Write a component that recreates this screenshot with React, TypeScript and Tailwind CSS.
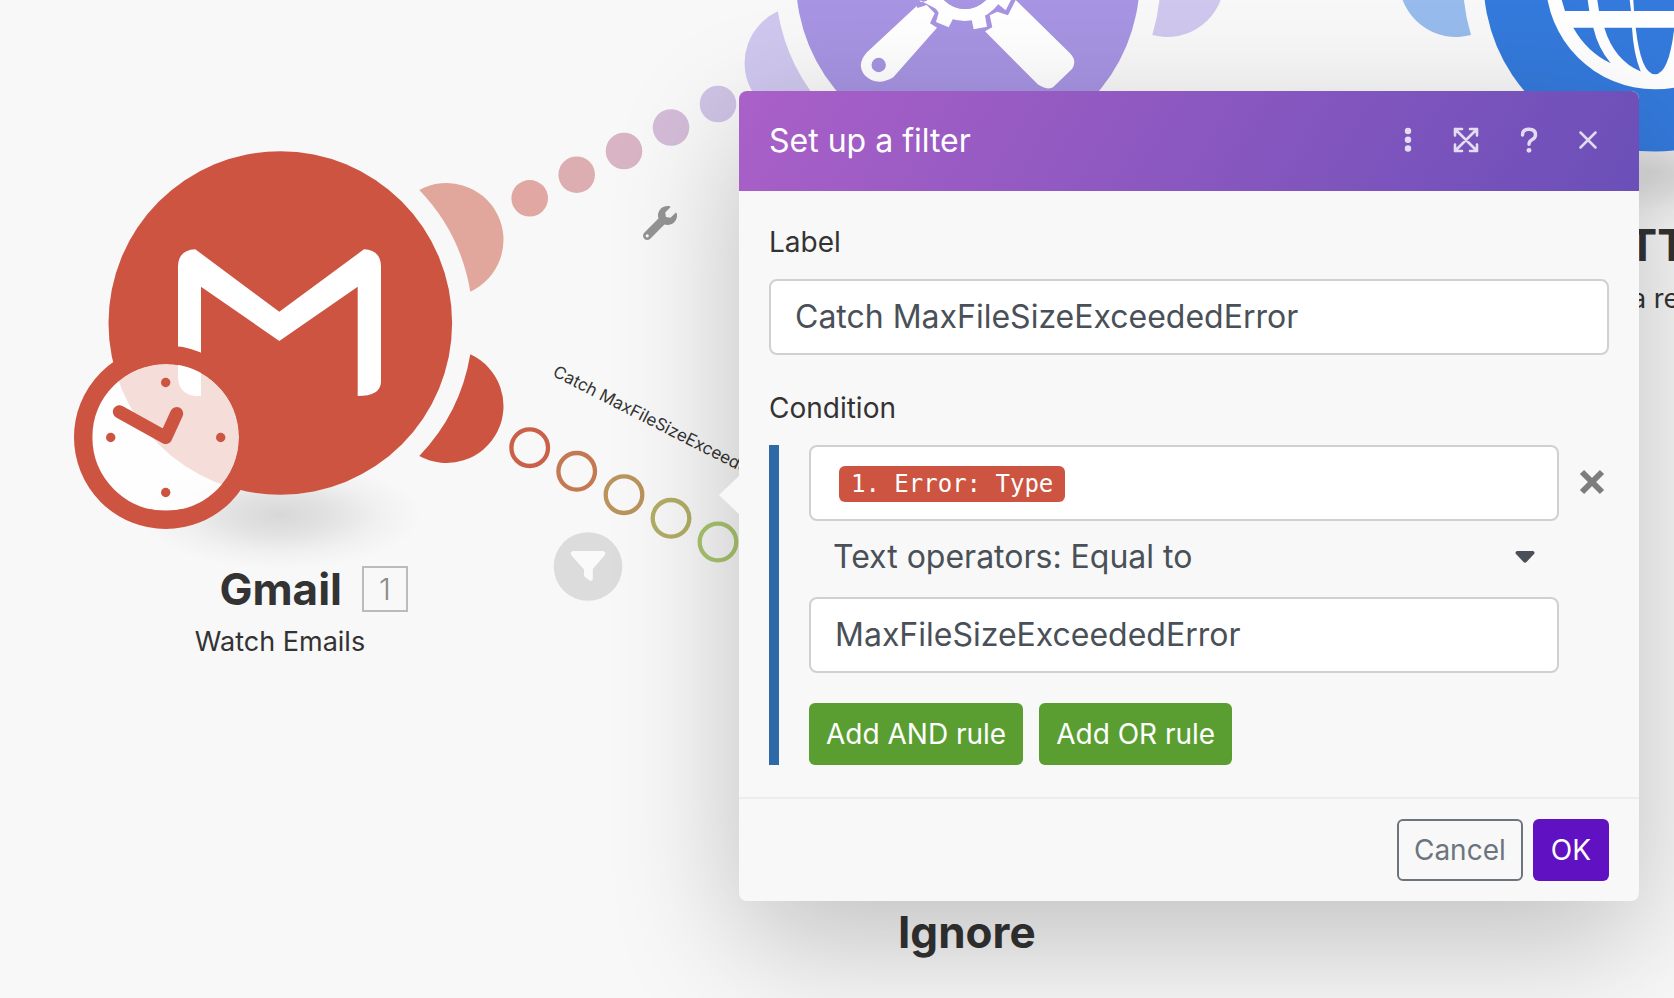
import { useState } from "react";
import type { ReactNode } from "react";

type Dot = { x: number; y: number; color: string };

const solidDots: Dot[] = [
  { x: 529.7, y: 198.3, color: "#e1a8a3" },
  { x: 576.7, y: 174.7, color: "#dcaeb1" },
  { x: 624, y: 151, color: "#d8b4c4" },
  { x: 671, y: 127.5, color: "#d4bcd8" },
  { x: 718, y: 104, color: "#d0c4e6" },
];

const ringDots: Dot[] = [
  { x: 529.7, y: 447.7, color: "#cb6048" },
  { x: 576.7, y: 471.3, color: "#c47952" },
  { x: 624, y: 494.7, color: "#bb935c" },
  { x: 671, y: 518.3, color: "#b3ad65" },
  { x: 718, y: 542, color: "#abc570" },
];

function Scene() {
  return (
    <svg
      className="pointer-events-none absolute left-0 top-0"
      width="1674"
      height="998"
      viewBox="0 0 1674 998"
      aria-hidden="true"
    >
      <defs>
        <radialGradient id="ground">
          <stop offset="0" stopColor="#000" stopOpacity="0.13" />
          <stop offset="0.35" stopColor="#000" stopOpacity="0.09" />
          <stop offset="0.7" stopColor="#000" stopOpacity="0.03" />
          <stop offset="1" stopColor="#000" stopOpacity="0" />
        </radialGradient>
      </defs>

      {/* Gmail module */}
      <ellipse cx="280" cy="515" rx="142" ry="54" fill="url(#ground)" />
      <circle cx="280.3" cy="323" r="171.8" fill="#cc5441" />
      <path d="M419.3 190A56.92 56.92 0 1 1 470.3 291.7A192.4 192.4 0 0 0 419.3 190Z" fill="#e2a79c" />
      <path d="M419.3 456A56.92 56.92 0 1 0 470.3 354.3A192.4 192.4 0 0 1 419.3 456Z" fill="#cc5441" />
      <path
        d="M178 266Q178.500 250 195.300 249.300L279.300 311.700L364 249.300Q380.500 250 381 266V382Q380.500 396 357.700 396V286.700L279.300 341L201 286.700V396H195Q178.500 394 178 377Z"
        fill="#fff"
      />
      <circle cx="165.700" cy="437.300" r="73.300" fill="#fff" fillOpacity="0.8" />
      <circle cx="165.700" cy="437.300" r="82.500" fill="none" stroke="#cc5441" strokeWidth="18.400" />
      <g fill="#cc5441">
        <circle cx="165.700" cy="382.500" r="4.700" />
        <circle cx="165.700" cy="492.500" r="4.700" />
        <circle cx="110.700" cy="437.500" r="4.700" />
        <circle cx="220.700" cy="437.500" r="4.700" />
      </g>
      <path
        d="M119.300 411.700L165.700 437.500L176.700 413.500"
        fill="none"
        stroke="#cc5441"
        strokeWidth="13"
        strokeLinecap="round"
        strokeLinejoin="round"
      />

      {/* Routes */}
      {solidDots.map((d) => (
        <circle key={d.x} cx={d.x} cy={d.y} r="18.300" fill={d.color} />
      ))}
      {ringDots.map((d) => (
        <circle key={d.x} cx={d.x} cy={d.y} r="18.300" fill="none" stroke={d.color} strokeWidth="4.300" />
      ))}

      {/* Tools module */}
      <circle cx="967.800" cy="-20" r="171.800" fill="#a794e2" />
      <path d="M777.800 11.300A56.920 56.920 0 1 0 828.800 113A192.400 192.400 0 0 1 777.800 11.300Z" fill="#cfc7ee" />
      <path d="M1152.300 35A57 57 0 1 0 1152.300 -75A192.400 192.400 0 0 1 1152.300 35Z" fill="#cfc7ee" />
      <path
        fillRule="evenodd"
        d="M916.700 6L866.700 52.500Q856 65 865 75.500Q877 87 893.300 77.300L937 27.700L930 23.300L934.700 13.300L926.700 5L917.500 8ZM878.700 57.800a7.200 7.200 0 1 1 0 14.400a7.200 7.200 0 1 1 0-14.400Z"
        fill="#fff"
      />
      <path
        d="M985 31.300L992.300 27.300L989.700 15.300L997.300 11.700L1008 15.300L1015.700 0L1070 53.300Q1077.500 61 1072 69L1053 87.300Q1048 90.500 1038 84.500Z"
        fill="#fff"
      />
      <circle cx="965" cy="-20" r="35" fill="none" stroke="#fff" strokeWidth="12" />
      <path
        d="M919.300 0L921 2.300L926.500 1L929 -2L938.700 12.700L936 22L948.700 27.300L953.500 18ZM971.500 19L973.700 29.300L987 26.700L984.700 14L998 4L1005.700 10.300L1011 0L1000 -6L984 9Z"
        fill="#fff"
      />
      <circle cx="965" cy="-20" r="29" fill="#a794e2" />

      {/* HTTP module */}
      <ellipse cx="1655" cy="172" rx="142" ry="54" fill="url(#ground)" />
      <circle cx="1655" cy="-20" r="171.500" fill="#347adc" />
      <path d="M1471 35A57 57 0 1 1 1471 -75A192.400 192.400 0 0 0 1471 35Z" fill="#97bbec" />
      <circle cx="1655" cy="-20" r="109.300" fill="#fff" />
      <g fill="#347adc">
        <path d="M1561.700 0L1565 11H1589.300L1587.700 0Z" />
        <path d="M1597.300 0L1599 11H1631L1629.700 0Z" />
        <path d="M1633.300 0L1634 11H1676V0Z" />
        <path d="M1573.300 27.700H1593.300Q1598 48 1610.700 63.300Q1587 52 1573.300 27.700Z" />
        <path d="M1604.300 27.700H1632Q1633.500 54 1640.700 71.500Q1614 60 1604.300 27.700Z" />
        <path d="M1635.700 27.700H1674.300Q1669 74 1655 74.300Q1641 74 1635.700 27.700Z" />
      </g>

      {/* Wrench */}
      <g transform="translate(643 206) scale(0.0665)" fill="#949494">
        <path d="M507.730 109.100c-2.240-9.030-13.540-12.090-20.120-5.510l-74.360 74.360-67.880-11.310-11.310-67.880 74.360-74.360c6.620-6.620 3.430-17.900-5.660-20.160-47.380-11.740-99.550.91-136.580 37.930-39.640 39.640-50.550 97.100-34.050 147.200L18.740 402.760c-24.990 24.990-24.990 65.510 0 90.500 24.990 24.990 65.510 24.990 90.500 0l213.210-213.210c50.120 16.710 107.470 5.680 147.370-34.220 37.070-37.070 49.700-89.320 37.910-136.730zM64 472c-13.250 0-24-10.750-24-24 0-13.260 10.750-24 24-24s24 10.740 24 24c0 13.250-10.750 24-24 24z" />
      </g>

      {/* Filter badge */}
      <circle cx="588" cy="566.500" r="34.300" fill="#dcdcdc" />
      <path
        d="M573 551H603Q607 552 604.500 555.500L592.800 569V579Q592 581.500 589.500 580.500L585 577Q584 576 584 574.500V569.500L571.500 555.500Q569.500 552 573 551Z"
        fill="#fafafa"
      />
    </svg>
  );
}

function HeaderButton({ label, children }: { label: string; children: ReactNode }) {
  return (
    <button type="button" aria-label={label} className="flex h-10 items-center justify-center pb-0.5 text-white/80">
      {children}
    </button>
  );
}

function FilterPanel() {
  const [label, setLabel] = useState("Catch MaxFileSizeExceededError");
  const [value, setValue] = useState("MaxFileSizeExceededError");
  const field =
    "h-[76px] w-full rounded-lg border-2 border-[#d0d0d0] bg-white px-6 pb-0.5 text-[32px] text-[#495057] outline-none";

  return (
    <section
      role="dialog"
      aria-labelledby="panel-title"
      className="relative rounded-lg bg-[#f8f8f8] shadow-[0_40px_128px_rgba(0,0,0,0.23)]"
    >
      <svg className="absolute -left-5 top-[384px]" width="21" height="40" viewBox="0 0 21 40" aria-hidden="true">
        <path d="M21 0L0 20L21 40Z" fill="#f8f8f8" />
      </svg>

      <header className="flex h-[100px] items-center justify-between rounded-t-lg bg-[linear-gradient(120deg,#aa60c8,#6b4fb8)] pl-[30px] pr-[42px] text-white">
        <h2 id="panel-title" className="text-[32px] font-normal">
          Set up a filter
        </h2>
        <div className="flex items-center gap-[41px]">
          <HeaderButton label="More options">
            <svg width="8" height="26" viewBox="0 0 8 26" fill="currentColor">
              <circle cx="4" cy="4" r="3.200" />
              <circle cx="4" cy="12.800" r="3.200" />
              <circle cx="4" cy="21.500" r="3.200" />
            </svg>
          </HeaderButton>
          <HeaderButton label="Expand">
            <svg
              width="26"
              height="26"
              viewBox="0 0 26 26"
              fill="none"
              stroke="currentColor"
              strokeWidth="2.600"
              strokeLinecap="round"
              strokeLinejoin="round"
            >
              <path d="M2 2L24 24M24 2L2 24M2 8.500V2H9M17 2H24V8.500M24 17.500V24H17M9 24H2V17.500" />
            </svg>
          </HeaderButton>
          <HeaderButton label="Help">
            <svg width="18" height="26" viewBox="0 0 18 26" fill="none" stroke="currentColor" strokeLinecap="round">
              <path
                d="M2.500 8Q2.500 2.200 9 2.200Q15.500 2.200 15.500 7.800Q15.500 11 12 12.800Q9 14.500 9 17.300"
                strokeWidth="3.400"
                strokeLinejoin="round"
              />
              <circle cx="9" cy="23.300" r="2.400" fill="currentColor" stroke="none" />
            </svg>
          </HeaderButton>
          <HeaderButton label="Close">
            <svg width="18" height="18" viewBox="0 0 18 18" fill="none" stroke="currentColor" strokeWidth="2.500" strokeLinecap="round">
              <path d="M1.500 1.500L16.500 16.500M16.500 1.500L1.500 16.500" />
            </svg>
          </HeaderButton>
        </div>
      </header>

      <form onSubmit={(e) => e.preventDefault()}>
        <div className="px-[30px] pb-8 pt-[30px]">
          <label htmlFor="filter-label" className="mb-4 block text-[28px] leading-[42px] text-[#333]">
            Label
          </label>
          <input id="filter-label" className={field} value={label} onChange={(e) => setLabel(e.target.value)} />

          <fieldset className="mt-8">
            <legend className="mb-4 block text-[28px] leading-[42px] text-[#333]">Condition</legend>
            <div className="border-l-[10px] border-[#2e6aa7] pl-[30px]">
              <div className="flex">
                <div className="min-w-0 flex-1">
                  <div className="flex h-[76px] items-center rounded-lg border-2 border-[#d0d0d0] bg-white px-7 pt-0.5">
                    <span className="rounded-md bg-[#cc5441] px-3 font-['DejaVu_Sans_Mono',monospace] text-[24px] leading-9 text-white">
                      1. Error: Type
                    </span>
                  </div>
                  <div className="relative h-[76px]">
                    <select
                      aria-label="Operator"
                      className="h-full w-full appearance-none bg-transparent px-6 pb-1 text-[32px] text-[#495057] outline-none"
                    >
                      <option>Text operators: Equal to</option>
                    </select>
                    <svg
                      className="pointer-events-none absolute right-6 top-[29px]"
                      width="20"
                      height="14"
                      viewBox="0 0 20 14"
                      aria-hidden="true"
                    >
                      <path d="M2 1H18Q20.500 2 19 4L11.500 12Q10 13.500 8.500 12L1 4Q-0.500 2 2 1Z" fill="#495057" />
                    </svg>
                  </div>
                  <input
                    aria-label="Value"
                    className={field}
                    value={value}
                    onChange={(e) => setValue(e.target.value)}
                  />
                </div>
                <button
                  type="button"
                  aria-label="Remove condition"
                  className="flex h-[76px] w-[50px] items-center justify-end pb-0.5 pr-1"
                >
                  <svg width="26" height="26" viewBox="0 0 26 26" fill="none" stroke="#7d7d7d" strokeWidth="6">
                    <path d="M3 3L23 23M23 3L3 23" />
                  </svg>
                </button>
              </div>
              <div className="mt-[30px] flex gap-4">
                <button type="button" className="h-[62px] rounded-md bg-[#5a9e32] px-[17px] text-[28px] text-white">
                  Add AND rule
                </button>
                <button type="button" className="h-[62px] rounded-md bg-[#5a9e32] px-[17px] text-[28px] text-white">
                  Add OR rule
                </button>
              </div>
            </div>
          </fieldset>
        </div>

        <footer className="flex justify-end gap-[10px] border-t-2 border-[#ededed] px-[30px] py-5">
          <button
            type="button"
            className="h-[62px] rounded-md border-2 border-[#6c757d] px-[15px] text-[28px] text-[#6c757d]"
          >
            Cancel
          </button>
          <button type="submit" className="h-[62px] rounded-md bg-[#6011c1] px-[18px] text-[28px] text-white">
            OK
          </button>
        </footer>
      </form>
    </section>
  );
}

export default function App() {
  return (
    <main className="relative h-screen overflow-hidden bg-[#f8f8f8] font-['Inter',sans-serif] text-[#333]">
      <Scene />

      {/* Module captions on the canvas */}
      <div className="absolute left-[180px] top-[562px] w-[200px]">
        <div className="flex justify-end gap-5">
          <h3 className="text-[44px] font-bold leading-[54px]">Gmail</h3>
          <span className="-mr-7 mt-1 flex h-[46px] w-[46px] items-center justify-center border-2 border-[#bbb] text-[30px] font-light text-[#8a8a8a]">
            1
          </span>
        </div>
        <p className="mt-[10px] text-center text-[27px] leading-8">Watch Emails</p>
      </div>
      <div className="absolute left-[550px] top-[359px] origin-bottom-left rotate-[27deg] whitespace-nowrap text-[17px] leading-5">
        Catch MaxFileSizeExceededError
      </div>
      <h3 className="absolute left-[1595px] top-[218px] whitespace-nowrap text-[44px] font-bold leading-[54px]">HTTP</h3>
      <p className="absolute left-[1554px] top-[283px] whitespace-nowrap text-[27px] leading-8">Make a request</p>
      <h3 className="absolute left-[898px] top-[905px] text-[44px] font-bold leading-[54px]">Ignore</h3>

      <div className="pl-[739px] pr-[35px] pt-[91px]">
        <FilterPanel />
      </div>
    </main>
  );
}
